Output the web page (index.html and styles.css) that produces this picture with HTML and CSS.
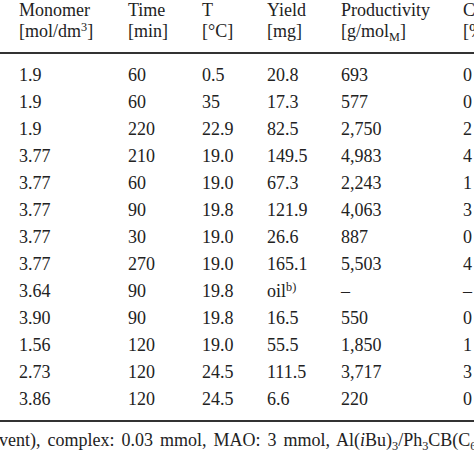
FILE: index.html
```html
<!DOCTYPE html>
<html>
<head>
<meta charset="utf-8">
<link rel="stylesheet" href="styles.css">
</head>
<body>
<div class="page">
  <div class="cols head">
    <div>Monomer<br>[mol/dm<sup>3</sup>]</div>
    <div>Time<br>[min]</div>
    <div>T<br>[°C]</div>
    <div>Yield<br>[mg]</div>
    <div>Productivity<br>[g/mol<sub>M</sub>]</div>
    <div>Conv.<br>[%]</div>
  </div>
  <div class="rule"></div>
  <div class="cols body">
    <div>1.9</div><div>60</div><div>0.5</div><div>20.8</div><div>693</div><div>0</div>
    <div>1.9</div><div>60</div><div>35</div><div>17.3</div><div>577</div><div>0</div>
    <div>1.9</div><div>220</div><div>22.9</div><div>82.5</div><div>2,750</div><div>2</div>
    <div>3.77</div><div>210</div><div>19.0</div><div>149.5</div><div>4,983</div><div>4</div>
    <div>3.77</div><div>60</div><div>19.0</div><div>67.3</div><div>2,243</div><div>1</div>
    <div>3.77</div><div>90</div><div>19.8</div><div>121.9</div><div>4,063</div><div>3</div>
    <div>3.77</div><div>30</div><div>19.0</div><div>26.6</div><div>887</div><div>0</div>
    <div>3.77</div><div>270</div><div>19.0</div><div>165.1</div><div>5,503</div><div>4</div>
    <div>3.64</div><div>90</div><div>19.8</div><div>oil<sup>b)</sup></div><div>–</div><div>–</div>
    <div>3.90</div><div>90</div><div>19.8</div><div>16.5</div><div>550</div><div>0</div>
    <div>1.56</div><div>120</div><div>19.0</div><div>55.5</div><div>1,850</div><div>1</div>
    <div>2.73</div><div>120</div><div>24.5</div><div>111.5</div><div>3,717</div><div>3</div>
    <div>3.86</div><div>120</div><div>24.5</div><div>6.6</div><div>220</div><div>0</div>
  </div>
  <div class="rule bottom"></div>
  <p class="note">(solvent), complex: 0.03 mmol, MAO: 3 mmol, Al(<i>i</i>Bu)<sub>3</sub>/Ph<sub>3</sub>CB(C<sub>6</sub>F<sub>5</sub>)<sub>4</sub></p>
</div>
</body>
</html>
```
FILE: styles.css
```css
html, body {
  margin: 0;
  padding: 0;
  background: #fff;
}
.page {
  width: 474px;
  height: 474px;
  overflow: hidden;
  font-family: "Liberation Serif", "Times New Roman", serif;
  font-size: 18px;
  color: #222;
}
.cols {
  display: grid;
  grid-template-columns: 109px 74px 65px 74px 122px 60px;
  padding-left: 19px;
  white-space: nowrap;
}
.head {
  line-height: 21px;
}
.body {
  grid-auto-rows: 27px;
  line-height: 27px;
  padding-top: 8px;
}
.rule {
  height: 2px;
  background: #333;
  margin-top: 10px;
}
.rule.bottom {
  margin-top: 7px;
}
sup, sub {
  font-size: 0.68em;
  line-height: 0;
  position: relative;
  vertical-align: baseline;
}
sup { top: -0.5em; }
sub { top: 0.3em; }
.note {
  margin: 8px 0 0 0;
  line-height: 21px;
  white-space: nowrap;
  text-indent: -28px;
  word-spacing: 2.5px;
}
```
